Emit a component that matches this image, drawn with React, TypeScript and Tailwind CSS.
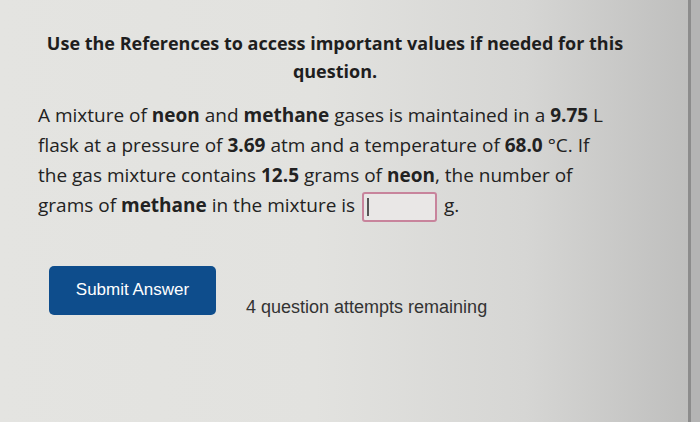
import React from "react";

export default function App() {
  return (
    <div className="w-[700px] h-[422px] overflow-hidden flex bg-[linear-gradient(90deg,#e4e4e1_0%,#e2e2df_45%,#d6d6d4_75%,#bdbdbc_100%)]">
      <div className="flex-1 flex flex-col" style={{ fontFamily: '"Open Sans", sans-serif' }}>
        <div className="pt-[29px] pl-[41px] pr-[59px] text-center text-[18px] leading-[28px] font-bold text-[#1e1e1e]">
          Use the References to access important values if needed for this question.
        </div>
        <div className="mt-[15px] pl-[38px] pr-[80px] text-[19px] leading-[30px] text-[#222]">
          A mixture of <b>neon</b> and <b>methane</b> gases is maintained in a <b>9.75</b> L flask at a pressure of{" "}
          <b>3.69</b> atm and a temperature of <b>68.0</b> °C. If the gas mixture contains <b>12.5</b> grams of{" "}
          <b>neon</b>, the number of grams of <b>methane</b> in the mixture is{" "}
          <span className="inline-flex align-middle items-center w-[75px] h-[30px] border-2 border-[#c8849c] rounded-[3px] bg-[#e9e7e6] mx-[2px] pl-[3px]">
            <span className="w-[2px] h-[18px] bg-[#555]" />
          </span>{" "}
          g.
        </div>
        <div className="mt-[44px] pl-[49px] flex items-start gap-[30px]" style={{ fontFamily: '"Liberation Sans", Arial, sans-serif' }}>
          <button className="w-[167px] h-[49px] rounded-[5px] bg-[#0e4d8c] text-white text-[17px] pb-[2px]">
            Submit Answer
          </button>
          <div className="mt-[28px] text-[18px] text-[#333]">4 question attempts remaining</div>
        </div>
      </div>
      <div className="w-[3px] bg-[#8c8c8c]" />
      <div className="w-[9px] bg-[#b4b4b4]" />
    </div>
  );
}
